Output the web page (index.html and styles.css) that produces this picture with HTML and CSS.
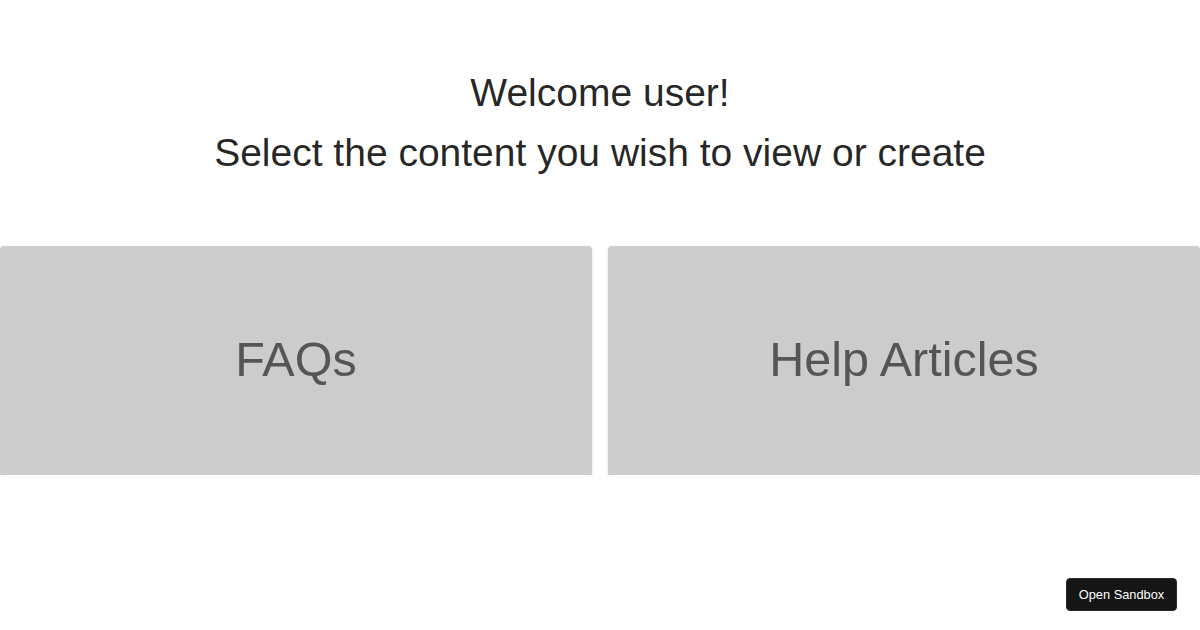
FILE: index.html
```html
<!DOCTYPE html>
<html lang="en">
<head>
    <meta charset="UTF-8">
    <meta name="viewport" content="width=device-width, initial-scale=1.0">
    <title>Welcome</title>
    <link rel="stylesheet" href="styles.css">
</head>
<body>
    <div class="welcome">
        <h2>Welcome user!</h2>
        <h2>Select the content you wish to view or create</h2>
    </div>

    <div class="cards">
        <div class="card">FAQs</div>
        <div class="card">Help Articles</div>
    </div>

    <button class="sandbox-btn">Open Sandbox</button>
</body>
</html>
```

FILE: styles.css
```css
body {
    font-family: 'Liberation Sans', Arial, sans-serif;
    margin: 0;
    padding: 0;
    background: white;
    color: rgba(0,0,0,0.87);
}

.welcome {
    text-align: center;
    padding-top: 63px;
}

.welcome h2 {
    font-size: 39px;
    font-weight: normal;
    line-height: 60px;
    margin: 0;
}

.cards {
    display: grid;
    grid-template-columns: 1fr 1fr;
    gap: 16px;
    margin-top: 63px;
}

.card {
    background: #cccccc;
    height: 229px;
    border-radius: 4px;
    box-shadow: 0 2px 1px -1px rgba(0,0,0,0.2), 0 1px 1px 0 rgba(0,0,0,0.14), 0 1px 3px 0 rgba(0,0,0,0.12);
    display: flex;
    justify-content: center;
    align-items: center;
    padding-bottom: 3px;
    box-sizing: border-box;
    font-size: 48.5px;
    color: #555;
}

.sandbox-btn {
    position: fixed;
    right: 23px;
    bottom: 19px;
    width: 111px;
    height: 33px;
    background: #151515;
    color: white;
    border: 1px solid #2a2a2a;
    border-radius: 4px;
    font-family: inherit;
    font-size: 12.8px;
    padding: 0;
}
```
